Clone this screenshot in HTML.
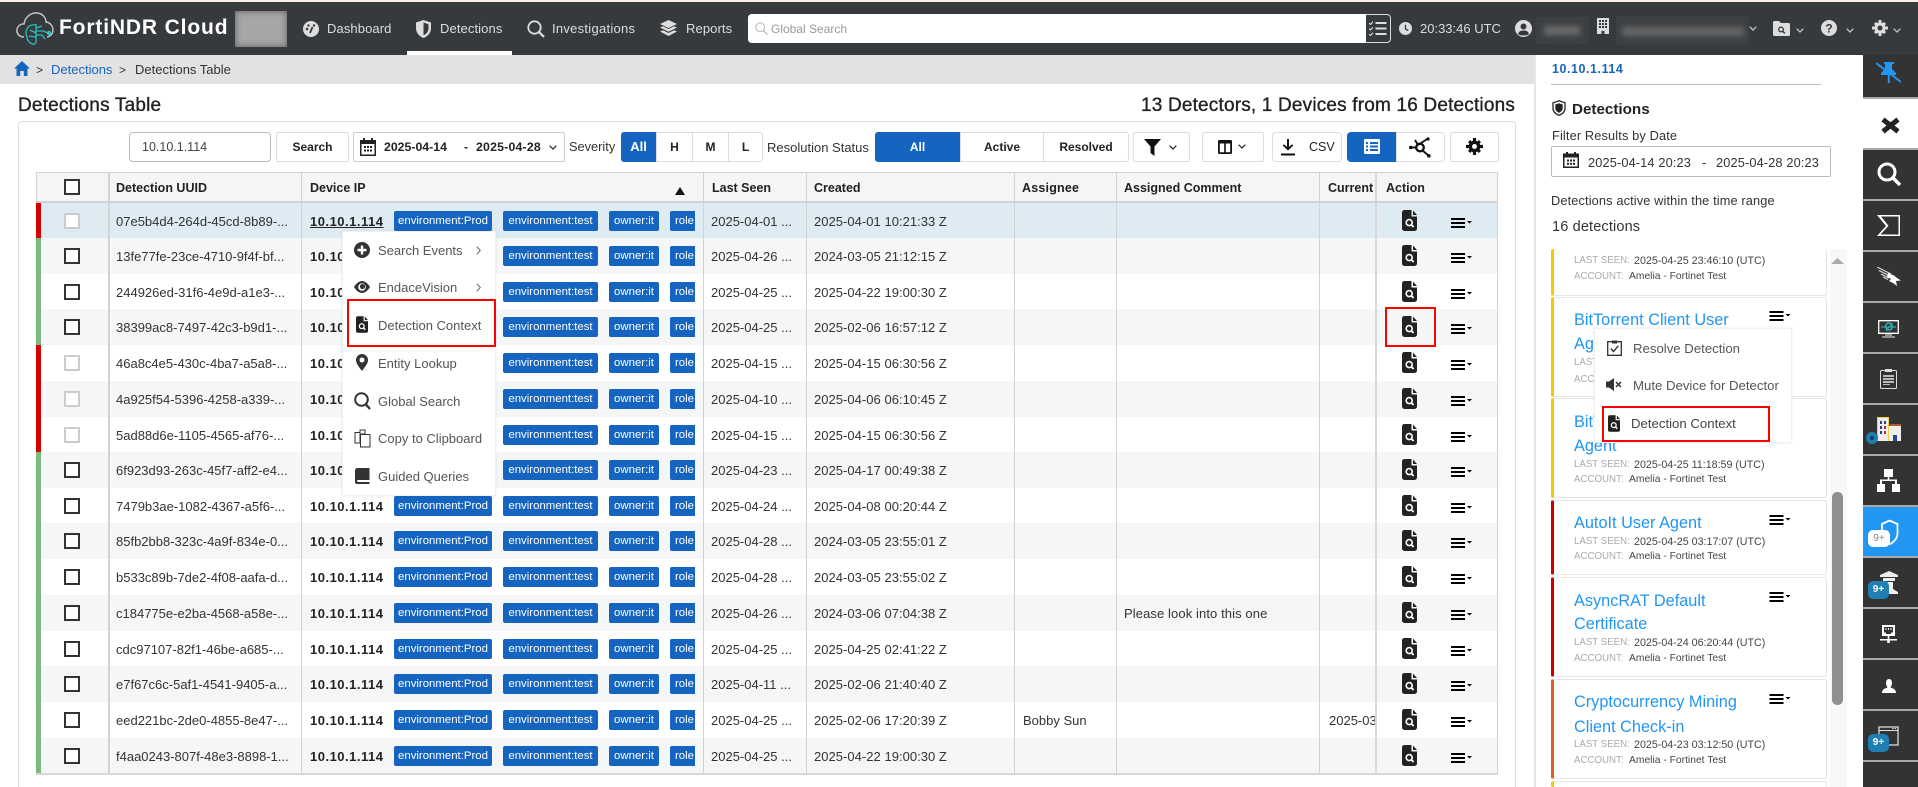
<!DOCTYPE html>
<html><head><meta charset="utf-8"><title>Detections Table</title>
<style>
*{box-sizing:border-box}
html,body{margin:0;padding:0;width:1918px;height:787px;overflow:hidden;background:#fff;font-family:"Liberation Sans",sans-serif;font-size:13px;color:#333}
.wrap{position:absolute;left:0;top:0;width:1918px;height:787px;overflow:hidden}
.a{position:absolute;white-space:nowrap}
.hd{position:absolute;left:0;top:2px;width:1918px;height:53px;background:#373a3d}
.nv{position:absolute;top:19px;line-height:20px;font-size:13px;color:#ddd;letter-spacing:.1px;white-space:nowrap}
.btn{position:absolute;top:132px;height:30px;border:1px solid #ddd;background:#fff;text-align:center;line-height:28px;color:#222;white-space:nowrap}
.ln{position:absolute;top:172px;width:1px;height:602px;background:#d2d2d2;z-index:3}
.th{position:absolute;top:178px;line-height:20px;font-weight:bold;font-size:12.5px;color:#222;white-space:nowrap;z-index:4}
.r{position:absolute;left:36px;width:1462px;line-height:37px;background:#fff;overflow:hidden}
.s{background:#f5f6f8}
.r>*{position:absolute;white-space:nowrap}
.g,.d{left:0;top:0;width:5px;height:36px}
.g{background:#7cb87f}.d{background:#d40000}
.cb{left:28px;top:10px;width:16px;height:16px;border:2px solid #333;background:#fff}
.cb.x{border-color:#ccc}
.u{left:80px}.ip{left:274px;font-weight:bold;color:#222;letter-spacing:.5px}
.t{top:8px;height:20px;line-height:21px;background:#1565c0;color:#fff;border-radius:2px;font-size:11.4px;text-align:center;overflow:hidden}
.t1{left:358px;width:98px}.t2{left:467px;width:95px}.t3{left:573px;width:50px}.t4{left:634px;width:25px;text-align:left;padding-left:5px;border-radius:2px 0 0 2px}
.ls{left:675px}.cr{left:778px;letter-spacing:.03px}
.doc{left:1366px;top:7px;width:15px;height:21px}
.ham{left:1415px;top:15px;width:21px;height:10px}
.mi{position:absolute;left:378px;line-height:20px;color:#555;white-space:nowrap;z-index:11}
.ct{position:absolute;font-size:16.3px;color:#2196f3;line-height:24px;white-space:nowrap}
.k{position:absolute;left:1574px;font-size:9.7px;color:#aaa;line-height:14px;white-space:nowrap}
.v{position:absolute;left:1629px;font-size:10.3px;color:#444;line-height:14px;white-space:nowrap}
.vd{position:absolute;left:1634px;font-size:10.7px;color:#444;line-height:14px;white-space:nowrap}
.cd{position:absolute;left:1551px;width:276px;background:#fff;border:1px solid #e6e6e6;border-left:3px solid #f5c800;border-radius:2px}
.sb{position:absolute;left:1863px;width:55px;height:2px;background:#a9a9a9}
.b9{position:absolute;left:1868px;width:21px;height:18px;line-height:18px;border-radius:5px;background:#1f7eb2;color:#fff;font-size:10px;font-weight:bold;text-align:center}
.ch{position:absolute;width:8px;height:5px}
.pn{position:absolute;line-height:20px;font-size:13.2px;color:#555;white-space:nowrap}
</style></head><body><div class="wrap">
<svg width="0" height="0" style="position:absolute">
<symbol id="doc" viewBox="0 0 15 21"><path fill="#222" d="M2.5 0H9.5V6.5H15V18.5A2.5 2.5 0 0 1 12.5 21H2.5A2.5 2.5 0 0 1 0 18.5V2.5A2.5 2.5 0 0 1 2.5 0Z"/><path fill="#222" d="M11 0.5L15 5H11Z"/><circle cx="7.2" cy="12.6" r="3" fill="none" stroke="#fff" stroke-width="1.6"/><path d="M9.4 14.8L11.6 17" stroke="#fff" stroke-width="1.8"/></symbol>
<symbol id="ham" viewBox="0 0 21 10"><path fill="#000" d="M0 0H14V2H0ZM0 4H14V6H0ZM0 8H14V10H0ZM16 3H21L18.5 5.5Z"/></symbol>
<symbol id="chv" viewBox="0 0 8 5"><path d="M.7.7L4 4 7.3.7" fill="none" stroke="currentColor" stroke-width="1.2"/></symbol>
</svg>

<div class="hd"></div>
<!-- logo -->
<svg class="a" style="left:15px;top:11px" width="40" height="36" viewBox="0 0 40 36"><path d="M9 26C3 26 1.5 21 2 18.5C2.5 15 6 12.5 9 13C10 6 16 1.5 22 2C28 2.5 31 7 31 11C35 11.5 38 15 38 19C38 23 35 25.500 32 26" fill="none" stroke="#c9c9c9" stroke-width="1.4"/><path d="M22 14C17 13 13 15 12 18C10 21 11 24 12 26C12 29 14 32 18 33C20 34 21 32 21 30V14M15 19L21 22M14 25L21 26M21 20H28L33 22M21 24H27L30 28M21 17L27 15" fill="none" stroke="#27c2bf" stroke-width="1.3"/><circle cx="34" cy="22" r="2.2" fill="#27c2bf"/></svg>
<div class="a" style="left:59px;top:15px;line-height:26px;font-size:21px;font-weight:bold;color:#fff;letter-spacing:.85px">FortiNDR Cloud</div>
<div class="a" style="left:235px;top:11px;width:52px;height:36px;background:#a6a6a6;box-shadow:inset 0 0 7px #5e5f60"></div>

<!-- nav -->
<svg class="a" style="left:303px;top:21px" width="16" height="16" viewBox="0 0 16 16"><circle cx="8" cy="8" r="8" fill="#ddd"/><circle cx="4" cy="8" r="1.3" fill="#373a3d"/><circle cx="5.5" cy="4.5" r="1.2" fill="#373a3d"/><circle cx="11" cy="4.5" r="1.2" fill="#373a3d"/><path d="M7 12L9.5 6" stroke="#373a3d" stroke-width="1.8"/></svg>
<div class="nv" style="left:327px">Dashboard</div>
<svg class="a" style="left:416px;top:20px" width="15" height="18" viewBox="0 0 15 18"><path d="M7.5 0L15 2.5V8C15 13 11.5 16.5 7.5 18C3.5 16.5 0 13 0 8V2.5Z" fill="#ddd"/><path d="M7.5 2.5L12.5 4.2V8C12.5 11.5 10.5 14 7.5 15.3Z" fill="#373a3d"/></svg>
<div class="nv" style="left:440px">Detections</div>
<div class="a" style="left:407px;top:51px;width:105px;height:4px;background:#fff"></div>
<svg class="a" style="left:527px;top:20px" width="18" height="18" viewBox="0 0 18 18"><circle cx="7.5" cy="7.5" r="6.2" fill="none" stroke="#ddd" stroke-width="1.8"/><path d="M12 12L17 17" stroke="#ddd" stroke-width="2.2"/></svg>
<div class="nv" style="left:552px;letter-spacing:.27px">Investigations</div>
<svg class="a" style="left:660px;top:20px" width="17" height="18" viewBox="0 0 17 18"><path fill="#ddd" d="M8.5 0L17 4 8.5 8 0 4ZM0 7.5L3 6.3 8.5 9 14 6.3 17 7.5 8.5 11.7ZM0 11.5L3 10.3 8.5 13 14 10.3 17 11.5 8.5 16Z"/></svg>
<div class="nv" style="left:686px">Reports</div>

<!-- global search -->
<div class="a" style="left:748px;top:14px;width:643px;height:29px;background:#373a3d;border:1px solid #ddd;border-radius:4px"></div>
<div class="a" style="left:748px;top:14px;width:618px;height:29px;background:#fff;border-radius:4px 0 0 4px"></div>
<svg class="a" style="left:755px;top:22px" width="13" height="13" viewBox="0 0 13 13"><circle cx="5.2" cy="5.2" r="4.4" fill="none" stroke="#bbb" stroke-width="1.1"/><path d="M8.4 8.4L12.5 12.5" stroke="#bbb" stroke-width="1.3"/></svg>
<div class="a" style="left:771px;top:19px;line-height:20px;font-size:12px;color:#999">Global Search</div>
<svg class="a" style="left:1369px;top:21px" width="18" height="15" viewBox="0 0 18 15"><path d="M0 2L1.5 3.5 4 .8M0 7.5L1.5 9 4 6.3M0 13L1.5 14.5 4 11.8" fill="none" stroke="#ddd" stroke-width="1.1"/><path d="M6.5 1H17.5V3H6.5ZM6.5 6.5H17.5V8.5H6.5ZM6.5 12H17.5V14H6.5Z" fill="#ddd"/></svg>

<svg class="a" style="left:1399px;top:22px" width="13" height="13" viewBox="0 0 13 13"><circle cx="6.5" cy="6.5" r="6.5" fill="#ddd"/><path d="M6.5 2.8V7L9.3 8.5" fill="none" stroke="#373a3d" stroke-width="1.3"/></svg>
<div class="a" style="left:1420px;top:19px;line-height:20px;font-size:13px;color:#ddd">20:33:46 UTC</div>
<svg class="a" style="left:1515px;top:20px" width="17" height="17" viewBox="0 0 17 17"><circle cx="8.5" cy="8.5" r="8.5" fill="#ddd"/><circle cx="8.5" cy="6.5" r="3" fill="#373a3d"/><path d="M3 14C4 11 6 10.5 8.5 10.5S13 11 14 14C12 16 5 16 3 14Z" fill="#373a3d"/></svg>
<div class="a" style="left:1536px;top:17px;width:53px;height:27px;background:#3d4043;overflow:hidden"><div style="position:absolute;left:8px;top:9px;width:36px;height:9px;background:#6a6a6a;filter:blur(3px)"></div></div>
<svg class="a" style="left:1597px;top:18px" width="12" height="16" viewBox="0 0 12 16"><path fill="#ddd" d="M0 0H12V16H7.5V13H4.5V16H0Z"/><path fill="#373a3d" d="M2 2H4V4H2ZM5 2H7V4H5ZM8 2H10V4H8ZM2 5H4V7H2ZM5 5H7V7H5ZM8 5H10V7H8ZM2 8H4V10H2ZM5 8H7V10H5ZM8 8H10V10H8Z"/></svg>
<div class="a" style="left:1616px;top:16px;width:133px;height:29px;background:#3d4043;overflow:hidden"><div style="position:absolute;left:6px;top:11px;width:122px;height:9px;background:#666;filter:blur(3px)"></div></div>
<svg class="ch" style="left:1749px;top:26px;color:#ccc"><use href="#chv"/></svg>
<svg class="a" style="left:1773px;top:21px" width="17" height="15" viewBox="0 0 17 15"><path fill="#ddd" d="M0 1.5A1.5 1.5 0 0 1 1.5 0H6L8 2H15.5A1.5 1.5 0 0 1 17 3.5V13.5A1.5 1.5 0 0 1 15.5 15H1.5A1.5 1.5 0 0 1 0 13.5Z"/><circle cx="8" cy="8.5" r="2.3" fill="none" stroke="#373a3d" stroke-width="1.3"/><path d="M9.7 10.2L11.8 12.3" stroke="#373a3d" stroke-width="1.5"/></svg>
<svg class="ch" style="left:1796px;top:28px;color:#ccc"><use href="#chv"/></svg>
<svg class="a" style="left:1821px;top:20px" width="16" height="16" viewBox="0 0 16 16"><circle cx="8" cy="8" r="8" fill="#ddd"/><text x="8" y="12.5" font-size="12" font-weight="bold" text-anchor="middle" fill="#373a3d" font-family="Liberation Sans,sans-serif">?</text></svg>
<svg class="ch" style="left:1846px;top:28px;color:#ccc"><use href="#chv"/></svg>
<svg class="a" style="left:1872px;top:20px" width="16" height="16" viewBox="0 0 16 16"><g fill="#ddd"><path fill-rule="evenodd" d="M8 2.500A5.500 5.500 0 1 0 8 13.500 5.500 5.500 0 1 0 8 2.500ZM8 5.500A2.500 2.500 0 1 1 8 10.500 2.500 2.500 0 1 1 8 5.500Z"/><path d="M6.500 0H9.500V3.500H6.500ZM6.500 12.500H9.500V16H6.500ZM0 6.500H3.500V9.500H0ZM12.500 6.500H16V9.500H12.500ZM1.900 4L4 1.900 6 4 4 6ZM10 12L12 10 14.100 12 12 14.100ZM1.900 12L4 10 6 12 4 14.100ZM10 4L12 1.900 14.100 4 12 6Z"/></g></svg>
<svg class="ch" style="left:1893px;top:28px;color:#ccc"><use href="#chv"/></svg>

<!-- breadcrumb -->
<div class="a" style="left:0;top:55px;width:1534px;height:29px;background:#e2e2e2"></div>
<svg class="a" style="left:14px;top:61px" width="16" height="15" viewBox="0 0 16 15"><path fill="#1565c0" d="M8 0L16 7.5H13.5V15H9.8V10H6.2V15H2.5V7.5H0Z"/></svg>
<div class="a" style="left:36px;top:60px;line-height:20px;font-size:12px;color:#333">&gt;</div>
<div class="a" style="left:51px;top:60px;line-height:20px;font-size:13px;color:#1565c0">Detections</div>
<div class="a" style="left:119px;top:60px;line-height:20px;font-size:12px;color:#333">&gt;</div>
<div class="a" style="left:135px;top:60px;line-height:20px;font-size:13px;color:#333">Detections Table</div>

<!-- headings -->
<div class="a" style="left:18px;top:94px;line-height:24px;font-size:19px;color:#222;-webkit-text-stroke:.35px #222;letter-spacing:.2px">Detections Table</div>
<div class="a" style="right:403px;top:94px;line-height:24px;font-size:19px;color:#222;-webkit-text-stroke:.35px #222;letter-spacing:.18px">13 Detectors, 1 Devices from 16 Detections</div>
<div class="a" style="left:18px;top:121px;width:1498px;height:666px;border:1px solid #ddd;border-bottom:0;border-radius:4px 4px 0 0"></div>

<!-- toolbar -->
<div class="a" style="left:129px;top:132px;width:142px;height:30px;border:1px solid #bbb;border-radius:4px;line-height:28px;padding-left:12px;font-size:12.5px;color:#444">10.10.1.114</div>
<div class="btn" style="left:276px;width:73px;border-radius:2px;font-weight:bold;font-size:12px">Search</div>
<div class="btn" style="left:353px;width:212px;border-color:#ccc;border-radius:2px"></div>
<svg class="a" style="left:360px;top:138px" width="16" height="18" viewBox="0 0 16 18"><path fill="#222" d="M0 2H3V0H5V2H11V0H13V2H16V18H0ZM1.5 6V16.500H14.5V6Z"/><path fill="#222" d="M4 8H6V10H4ZM7 8H9V10H7ZM10 8H12V10H10ZM4 11.5H6V13.5H4ZM7 11.5H9V13.5H7ZM10 11.5H12V13.5H10Z"/></svg>
<div class="a" style="left:384px;top:137px;line-height:20px;font-weight:bold;font-size:12.3px;color:#222">2025-04-14</div>
<div class="a" style="left:464px;top:137px;line-height:20px;font-weight:bold;font-size:12px;color:#222">-</div>
<div class="a" style="left:476px;top:137px;line-height:20px;font-weight:bold;font-size:12.3px;color:#222;letter-spacing:.2px">2025-04-28</div>
<svg class="ch" style="left:549px;top:145px;color:#222"><use href="#chv"/></svg>
<div class="a" style="left:569px;top:137px;line-height:20px;font-size:12.8px;color:#333">Severity</div>
<div class="btn" style="left:621px;width:35px;background:#1565c0;border-color:#1565c0;color:#fff;font-weight:bold;border-radius:3px 0 0 3px">All</div>
<div class="btn" style="left:656px;width:37px;font-weight:bold;font-size:12px">H</div>
<div class="btn" style="left:692px;width:37px;font-weight:bold;font-size:12px">M</div>
<div class="btn" style="left:728px;width:35px;font-weight:bold;font-size:12px;border-radius:0 3px 3px 0">L</div>
<div class="a" style="left:767px;top:138px;line-height:20px;font-size:13px;color:#333">Resolution Status</div>
<div class="btn" style="left:875px;width:85px;background:#1565c0;border-color:#1565c0;color:#fff;font-weight:bold;font-size:12px;border-radius:3px 0 0 3px">All</div>
<div class="btn" style="left:960px;width:84px;font-weight:bold;font-size:12px">Active</div>
<div class="btn" style="left:1043px;width:86px;font-weight:bold;font-size:12px;border-radius:0 3px 3px 0">Resolved</div>
<div class="btn" style="left:1133px;width:57px;border-radius:2px"></div>
<svg class="a" style="left:1144px;top:139px" width="17" height="17" viewBox="0 0 17 17"><path fill="#111" d="M0 0H17L10.5 7.5V17L6.5 14V7.5Z"/></svg>
<svg class="ch" style="left:1169px;top:145px;color:#222"><use href="#chv"/></svg>
<div class="btn" style="left:1202px;width:62px;border-radius:2px"></div>
<svg class="a" style="left:1218px;top:140px" width="14" height="14" viewBox="0 0 14 14"><path fill="#111" fill-rule="evenodd" d="M1.5 0H12.5A1.5 1.5 0 0 1 14 1.5V12.5A1.5 1.5 0 0 1 12.5 14H1.5A1.5 1.5 0 0 1 0 12.5V1.5A1.5 1.5 0 0 1 1.5 0ZM1.8 3.5V12.2H6.2V3.5ZM7.8 3.5V12.2H12.2V3.5Z"/></svg>
<svg class="ch" style="left:1238px;top:144px;color:#222"><use href="#chv"/></svg>
<div class="btn" style="left:1272px;width:70px;border-radius:4px;text-align:left;padding-left:36px;font-size:12.5px">CSV</div>
<svg class="a" style="left:1281px;top:139px" width="14" height="17" viewBox="0 0 14 17"><path fill="#111" d="M6 0H8V8L11 5.2 12.3 6.5 7 11.5 1.7 6.5 3 5.2 6 8ZM0 14.5H14V16.5H0Z"/></svg>
<div class="btn" style="left:1347px;width:50px;background:#1565c0;border-color:#1565c0;border-radius:4px 0 0 4px"></div>
<svg class="a" style="left:1364px;top:139px" width="16" height="15" viewBox="0 0 16 15"><path fill="#fff" fill-rule="evenodd" d="M1.5 0H14.5A1.5 1.5 0 0 1 16 1.5V13.5A1.5 1.5 0 0 1 14.5 15H1.5A1.5 1.5 0 0 1 0 13.5V1.5A1.5 1.5 0 0 1 1.5 0ZM2 3V5H4V3ZM6 3V5H14V3ZM2 6.5V8.5H4V6.5ZM6 6.5V8.5H14V6.5ZM2 10V12H4V10ZM6 10V12H14V10Z"/></svg>
<div class="btn" style="left:1396px;width:49px;border-radius:0 4px 4px 0"></div>
<svg class="a" style="left:1409px;top:137px" width="22" height="21" viewBox="0 0 22 21"><path d="M1 10.500H8M9 8L19 1.500M13 13L20 19M9 8L6 3" stroke="#111" stroke-width="1.9" fill="none"/><circle cx="11" cy="10.500" r="3.800" fill="none" stroke="#111" stroke-width="2.300"/><circle cx="1.800" cy="10.500" r="1.800" fill="#111"/><circle cx="19" cy="2" r="1.600" fill="#111"/><circle cx="19.800" cy="18.800" r="1.800" fill="#111"/></svg>
<div class="btn" style="left:1450px;width:49px;border-radius:2px"></div>
<svg class="a" style="left:1466px;top:138px" width="17" height="17" viewBox="0 0 16 16"><g fill="#111"><path fill-rule="evenodd" d="M8 2.500A5.500 5.500 0 1 0 8 13.500 5.500 5.500 0 1 0 8 2.500ZM8 5.700A2.300 2.300 0 1 1 8 10.300 2.300 2.300 0 1 1 8 5.700Z"/><path d="M6.500 0H9.500V3.500H6.500ZM6.500 12.500H9.500V16H6.500ZM0 6.500H3.500V9.500H0ZM12.500 6.500H16V9.500H12.500ZM1.900 4L4 1.900 6 4 4 6ZM10 12L12 10 14.100 12 12 14.100ZM1.900 12L4 10 6 12 4 14.100ZM10 4L12 1.900 14.100 4 12 6Z"/></g></svg>

<!-- table header -->
<div class="a" style="left:36px;top:172px;width:1462px;height:31px;background:#f5f5f5;border:1px solid #d2d2d2;border-bottom:2px solid #d2d2d2"></div>
<div class="a" style="left:64px;top:179px;width:16px;height:16px;border:2px solid #333;background:#fff;z-index:4"></div>
<div class="th" style="left:116px">Detection UUID</div>
<div class="th" style="left:310px">Device IP</div>
<svg class="a" style="left:675px;top:187px;z-index:4" width="10" height="8"><path d="M5 0L10 8H0Z" fill="#111"/></svg>
<div class="th" style="left:712px">Last Seen</div>
<div class="th" style="left:814px">Created</div>
<div class="th" style="left:1022px;letter-spacing:.2px">Assignee</div>
<div class="th" style="left:1124px">Assigned Comment</div>
<div class="th" style="left:1328px;width:47px;overflow:hidden">Current ...</div>
<div class="th" style="left:1386px">Action</div>

<!-- rows -->
<div class="r" style="top:203px;height:35px;background:#deebf3"><i class="d"></i><i class="cb x"></i><span class="u">07e5b4d4-264d-45cd-8b89-...</span><b class="ip" style="text-decoration:underline">10.10.1.114</b><span class="t t1">environment:Prod</span><span class="t t2">environment:test</span><span class="t t3">owner:it</span><span class="t t4">role:</span><span class="ls">2025-04-01 ...</span><span class="cr">2025-04-01 10:21:33 Z</span><svg class="doc"><use href="#doc"/></svg><svg class="ham"><use href="#ham"/></svg></div>
<div class="r s" style="top:238px;height:36px"><i class="g"></i><i class="cb"></i><span class="u">13fe77fe-23ce-4710-9f4f-bf...</span><b class="ip">10.10.1.114</b><span class="t t1">environment:Prod</span><span class="t t2">environment:test</span><span class="t t3">owner:it</span><span class="t t4">role:</span><span class="ls">2025-04-26 ...</span><span class="cr">2024-03-05 21:12:15 Z</span><svg class="doc"><use href="#doc"/></svg><svg class="ham"><use href="#ham"/></svg></div>
<div class="r" style="top:274px;height:35px"><i class="g"></i><i class="cb"></i><span class="u">244926ed-31f6-4e9d-a1e3-...</span><b class="ip">10.10.1.114</b><span class="t t1">environment:Prod</span><span class="t t2">environment:test</span><span class="t t3">owner:it</span><span class="t t4">role:</span><span class="ls">2025-04-25 ...</span><span class="cr">2025-04-22 19:00:30 Z</span><svg class="doc"><use href="#doc"/></svg><svg class="ham"><use href="#ham"/></svg></div>
<div class="r s" style="top:309px;height:36px"><i class="g"></i><i class="cb"></i><span class="u">38399ac8-7497-42c3-b9d1-...</span><b class="ip">10.10.1.114</b><span class="t t1">environment:Prod</span><span class="t t2">environment:test</span><span class="t t3">owner:it</span><span class="t t4">role:</span><span class="ls">2025-04-25 ...</span><span class="cr">2025-02-06 16:57:12 Z</span><svg class="doc"><use href="#doc"/></svg><svg class="ham"><use href="#ham"/></svg></div>
<div class="r" style="top:345px;height:36px"><i class="d"></i><i class="cb x"></i><span class="u">46a8c4e5-430c-4ba7-a5a8-...</span><b class="ip">10.10.1.114</b><span class="t t1">environment:Prod</span><span class="t t2">environment:test</span><span class="t t3">owner:it</span><span class="t t4">role:</span><span class="ls">2025-04-15 ...</span><span class="cr">2025-04-15 06:30:56 Z</span><svg class="doc"><use href="#doc"/></svg><svg class="ham"><use href="#ham"/></svg></div>
<div class="r s" style="top:381px;height:36px"><i class="d"></i><i class="cb x"></i><span class="u">4a925f54-5396-4258-a339-...</span><b class="ip">10.10.1.114</b><span class="t t1">environment:Prod</span><span class="t t2">environment:test</span><span class="t t3">owner:it</span><span class="t t4">role:</span><span class="ls">2025-04-10 ...</span><span class="cr">2025-04-06 06:10:45 Z</span><svg class="doc"><use href="#doc"/></svg><svg class="ham"><use href="#ham"/></svg></div>
<div class="r" style="top:417px;height:35px"><i class="d"></i><i class="cb x"></i><span class="u">5ad88d6e-1105-4565-af76-...</span><b class="ip">10.10.1.114</b><span class="t t1">environment:Prod</span><span class="t t2">environment:test</span><span class="t t3">owner:it</span><span class="t t4">role:</span><span class="ls">2025-04-15 ...</span><span class="cr">2025-04-15 06:30:56 Z</span><svg class="doc"><use href="#doc"/></svg><svg class="ham"><use href="#ham"/></svg></div>
<div class="r s" style="top:452px;height:36px"><i class="g"></i><i class="cb"></i><span class="u">6f923d93-263c-45f7-aff2-e4...</span><b class="ip">10.10.1.114</b><span class="t t1">environment:Prod</span><span class="t t2">environment:test</span><span class="t t3">owner:it</span><span class="t t4">role:</span><span class="ls">2025-04-23 ...</span><span class="cr">2025-04-17 00:49:38 Z</span><svg class="doc"><use href="#doc"/></svg><svg class="ham"><use href="#ham"/></svg></div>
<div class="r" style="top:488px;height:35px"><i class="g"></i><i class="cb"></i><span class="u">7479b3ae-1082-4367-a5f6-...</span><b class="ip">10.10.1.114</b><span class="t t1">environment:Prod</span><span class="t t2">environment:test</span><span class="t t3">owner:it</span><span class="t t4">role:</span><span class="ls">2025-04-24 ...</span><span class="cr">2025-04-08 00:20:44 Z</span><svg class="doc"><use href="#doc"/></svg><svg class="ham"><use href="#ham"/></svg></div>
<div class="r s" style="top:523px;height:36px"><i class="g"></i><i class="cb"></i><span class="u">85fb2bb8-323c-4a9f-834e-0...</span><b class="ip">10.10.1.114</b><span class="t t1">environment:Prod</span><span class="t t2">environment:test</span><span class="t t3">owner:it</span><span class="t t4">role:</span><span class="ls">2025-04-28 ...</span><span class="cr">2024-03-05 23:55:01 Z</span><svg class="doc"><use href="#doc"/></svg><svg class="ham"><use href="#ham"/></svg></div>
<div class="r" style="top:559px;height:36px"><i class="g"></i><i class="cb"></i><span class="u">b533c89b-7de2-4f08-aafa-d...</span><b class="ip">10.10.1.114</b><span class="t t1">environment:Prod</span><span class="t t2">environment:test</span><span class="t t3">owner:it</span><span class="t t4">role:</span><span class="ls">2025-04-28 ...</span><span class="cr">2024-03-05 23:55:02 Z</span><svg class="doc"><use href="#doc"/></svg><svg class="ham"><use href="#ham"/></svg></div>
<div class="r s" style="top:595px;height:36px"><i class="g"></i><i class="cb"></i><span class="u">c184775e-e2ba-4568-a58e-...</span><b class="ip">10.10.1.114</b><span class="t t1">environment:Prod</span><span class="t t2">environment:test</span><span class="t t3">owner:it</span><span class="t t4">role:</span><span class="ls">2025-04-26 ...</span><span class="cr">2024-03-06 07:04:38 Z</span><span style="left:1088px;letter-spacing:.1px">Please look into this one</span><svg class="doc"><use href="#doc"/></svg><svg class="ham"><use href="#ham"/></svg></div>
<div class="r" style="top:631px;height:35px"><i class="g"></i><i class="cb"></i><span class="u">cdc97107-82f1-46be-a685-...</span><b class="ip">10.10.1.114</b><span class="t t1">environment:Prod</span><span class="t t2">environment:test</span><span class="t t3">owner:it</span><span class="t t4">role:</span><span class="ls">2025-04-25 ...</span><span class="cr">2025-04-25 02:41:22 Z</span><svg class="doc"><use href="#doc"/></svg><svg class="ham"><use href="#ham"/></svg></div>
<div class="r s" style="top:666px;height:36px"><i class="g"></i><i class="cb"></i><span class="u">e7f67c6c-5af1-4541-9405-a...</span><b class="ip">10.10.1.114</b><span class="t t1">environment:Prod</span><span class="t t2">environment:test</span><span class="t t3">owner:it</span><span class="t t4">role:</span><span class="ls">2025-04-11 ...</span><span class="cr">2025-02-06 21:40:40 Z</span><svg class="doc"><use href="#doc"/></svg><svg class="ham"><use href="#ham"/></svg></div>
<div class="r" style="top:702px;height:36px"><i class="g"></i><i class="cb"></i><span class="u">eed221bc-2de0-4855-8e47-...</span><b class="ip">10.10.1.114</b><span class="t t1">environment:Prod</span><span class="t t2">environment:test</span><span class="t t3">owner:it</span><span class="t t4">role:</span><span class="ls">2025-04-25 ...</span><span class="cr">2025-02-06 17:20:39 Z</span><span style="left:987px">Bobby Sun</span><span style="left:1293px;width:47px;overflow:hidden">2025-03-01</span><svg class="doc"><use href="#doc"/></svg><svg class="ham"><use href="#ham"/></svg></div>
<div class="r s" style="top:738px;height:36px"><i class="g"></i><i class="cb"></i><span class="u">f4aa0243-807f-48e3-8898-1...</span><b class="ip">10.10.1.114</b><span class="t t1">environment:Prod</span><span class="t t2">environment:test</span><span class="t t3">owner:it</span><span class="t t4">role:</span><span class="ls">2025-04-25 ...</span><span class="cr">2025-04-22 19:00:30 Z</span><svg class="doc"><use href="#doc"/></svg><svg class="ham"><use href="#ham"/></svg></div>

<i class="ln" style="left:108px;width:2px"></i><i class="ln" style="left:301px"></i><i class="ln" style="left:703px"></i><i class="ln" style="left:806px"></i><i class="ln" style="left:1014px"></i><i class="ln" style="left:1116px"></i><i class="ln" style="left:1319px"></i><i class="ln" style="left:1375px;width:2px;background:#d8d8d8"></i><i class="ln" style="left:1497px"></i>
<div class="a" style="left:36px;top:773px;width:1462px;height:2px;background:#d8d8d8;z-index:3"></div>

<!-- context menu -->
<div class="a" style="left:342px;top:231px;width:154px;height:265px;background:#fff;border:1px solid #f0f0f0;box-shadow:0 0 3px rgba(0,0,0,.08);z-index:10"></div>
<svg class="a" style="left:354px;top:242px;z-index:11" width="16" height="16" viewBox="0 0 16 16"><circle cx="8" cy="8" r="8" fill="#333"/><path d="M6.8 3.5H9.2V6.8H12.5V9.2H9.2V12.5H6.8V9.2H3.5V6.8H6.8Z" fill="#fff"/></svg>
<div class="mi" style="top:241px">Search Events</div>
<svg class="a" style="left:476px;top:246px;z-index:11" width="5" height="9" viewBox="0 0 5 9"><path d="M.7.7L4.3 4.5.7 8.3" fill="none" stroke="#666" stroke-width="1"/></svg>
<svg class="a" style="left:354px;top:281px;z-index:11" width="16" height="12" viewBox="0 0 16 12"><path d="M0 6C2 2.5 5 0 8 0S14 2.5 16 6C14 9.5 11 12 8 12S2 9.5 0 6Z" fill="#333"/><circle cx="8" cy="6" r="3.8" fill="#fff"/><circle cx="8.5" cy="5.5" r="2.6" fill="#333"/></svg>
<div class="mi" style="top:278px">EndaceVision</div>
<svg class="a" style="left:476px;top:283px;z-index:11" width="5" height="9" viewBox="0 0 5 9"><path d="M.7.7L4.3 4.5.7 8.3" fill="none" stroke="#666" stroke-width="1"/></svg>
<div class="a" style="left:347px;top:299px;width:149px;height:48px;border:2px solid #f00;z-index:12"></div>
<svg class="a" style="left:356px;top:316px;z-index:11" width="12" height="17" viewBox="0 0 15 21"><use href="#doc"/></svg>
<div class="mi" style="top:316px">Detection Context</div>
<svg class="a" style="left:356px;top:354px;z-index:11" width="12" height="17" viewBox="0 0 12 17"><path fill="#333" fill-rule="evenodd" d="M6 0A6 6 0 0 1 12 6C12 10 8 14 6 17 4 14 0 10 0 6A6 6 0 0 1 6 0ZM6 3.5A2.5 2.5 0 1 0 6 8.5 2.5 2.5 0 1 0 6 3.5Z"/></svg>
<div class="mi" style="top:354px">Entity Lookup</div>
<svg class="a" style="left:354px;top:392px;z-index:11" width="17" height="18" viewBox="0 0 17 18"><circle cx="7.5" cy="7.5" r="6.3" fill="none" stroke="#333" stroke-width="2"/><path d="M11.5 12L16 17" stroke="#333" stroke-width="2.4"/></svg>
<div class="mi" style="top:392px">Global Search</div>
<svg class="a" style="left:354px;top:429px;z-index:11" width="17" height="19" viewBox="0 0 17 19"><path d="M6 5V1H11V5ZM1 3.5H6V14H1ZM6.5 5.5H16V18H6.5Z" fill="#fff" stroke="#333" stroke-width="1"/></svg>
<div class="mi" style="top:429px">Copy to Clipboard</div>
<svg class="a" style="left:355px;top:468px;z-index:11" width="15" height="16" viewBox="0 0 15 16"><path fill="#333" d="M2.5 0H14.5V12H2.5A1.5 1.500 0 0 0 2.500 14H14.500V16H2A2 2 0 0 1 0 14V2.500A2.500 2.500 0 0 1 2.500 0Z"/></svg>
<div class="mi" style="top:467px">Guided Queries</div>

<!-- red box on action -->
<div class="a" style="left:1385px;top:307px;width:51px;height:40px;border:2px solid #f00;z-index:6"></div>

<!-- right panel -->
<div class="a" style="left:1534px;top:55px;width:329px;height:732px;background:#fff;border-left:2px solid #e6e6e6"></div>
<div class="a" style="left:1552px;top:59px;line-height:20px;font-size:12.5px;font-weight:bold;color:#1565c0;letter-spacing:.55px">10.10.1.114</div>
<div class="a" style="left:1551px;top:84px;width:270px;height:1px;background:#bbb"></div>
<svg class="a" style="left:1552px;top:100px" width="14" height="16" viewBox="0 0 14 16"><path d="M7 .8L13 2.8V8C13 11.5 10.5 14 7 15.2 3.5 14 1 11.5 1 8V2.8Z" fill="none" stroke="#222" stroke-width="1.3"/><path d="M7 3.3L10.7 4.5V8C10.7 10.3 9 12 7 12.8 5 12 3.3 10.3 3.3 8V4.5Z" fill="#222"/></svg>
<div class="a" style="left:1572px;top:100px;line-height:20px;font-size:15.2px;font-weight:bold;color:#222">Detections</div>
<div class="a" style="left:1552px;top:126px;line-height:20px;font-size:12.8px;color:#333;letter-spacing:.13px">Filter Results by Date</div>
<div class="a" style="left:1551px;top:146px;width:280px;height:31px;border:1px solid #bbb;border-radius:2px"></div>
<svg class="a" style="left:1563px;top:152px" width="16" height="16" viewBox="0 0 16 16"><path fill="#222" d="M0 1.5H3V0H5V1.5H11V0H13V1.5H16V16H0ZM1.5 5.5V14.5H14.5V5.5Z"/><path fill="#222" d="M4 7.5H6V9.5H4ZM7 7.5H9V9.5H7ZM10 7.5H12V9.5H10ZM4 10.8H6V12.8H4ZM7 10.8H9V12.8H7ZM10 10.8H12V12.8H10Z"/></svg>
<div class="a" style="left:1588px;top:153px;line-height:20px;font-size:12.8px;color:#333;letter-spacing:.12px">2025-04-14 20:23</div>
<div class="a" style="left:1702px;top:153px;line-height:20px;font-size:12.8px;color:#333">-</div>
<div class="a" style="left:1716px;top:153px;line-height:20px;font-size:12.8px;color:#333;letter-spacing:.12px">2025-04-28 20:23</div>
<div class="a" style="left:1551px;top:191px;line-height:20px;font-size:12.8px;color:#333;letter-spacing:.12px">Detections active within the time range</div>
<div class="a" style="left:1552px;top:217px;line-height:20px;font-size:14.5px;color:#333;letter-spacing:.15px">16 detections</div>

<div class="a" style="left:1830px;top:249px;width:17px;height:538px;background:#f8f8f8"></div>
<svg class="a" style="left:1831px;top:258px" width="13" height="6"><path d="M6.5 0L13 6H0Z" fill="#a8a8a8"/></svg>
<div class="a" style="left:1832px;top:492px;width:11px;height:213px;background:#8f8f8f;border-radius:5px"></div>

<div class="cd" style="top:249px;height:47px;border-top:0"></div>
<div class="k" style="top:254px">LAST SEEN:</div><div class="vd" style="top:254px">2025-04-25 23:46:10 (UTC)</div>
<div class="k" style="top:270px">ACCOUNT:</div><div class="v" style="top:270px">Amelia - Fortinet Test</div>

<div class="cd" style="top:297px;height:100px"></div>
<div class="ct" style="left:1574px;top:308px">BitTorrent Client User</div>
<div class="ct" style="left:1574px;top:332px">Agent</div>
<div class="k" style="top:356px">LAST</div><div class="k" style="top:373px">ACCOUNT</div>
<svg class="a" style="left:1769px;top:311px" width="22" height="10"><use href="#ham"/></svg>

<div class="cd" style="top:398px;height:100px"></div>
<div class="ct" style="left:1574px;top:410px">BitTorrent Client User</div>
<div class="ct" style="left:1574px;top:434px">Agent</div>
<div class="k" style="top:458px">LAST SEEN:</div><div class="vd" style="top:458px">2025-04-25 11:18:59 (UTC)</div>
<div class="k" style="top:473px">ACCOUNT:</div><div class="v" style="top:473px">Amelia - Fortinet Test</div>

<div class="cd" style="top:500px;height:75px;border-left-color:#cc0000"></div>
<div class="ct" style="left:1574px;top:511px">AutoIt User Agent</div>
<div class="k" style="top:535px">LAST SEEN:</div><div class="vd" style="top:535px">2025-04-25 03:17:07 (UTC)</div>
<div class="k" style="top:550px">ACCOUNT:</div><div class="v" style="top:550px">Amelia - Fortinet Test</div>
<svg class="a" style="left:1769px;top:515px" width="22" height="10"><use href="#ham"/></svg>

<div class="cd" style="top:577px;height:100px;border-left-color:#cc0000"></div>
<div class="ct" style="left:1574px;top:589px">AsyncRAT Default</div>
<div class="ct" style="left:1574px;top:612px">Certificate</div>
<div class="k" style="top:636px">LAST SEEN:</div><div class="vd" style="top:636px">2025-04-24 06:20:44 (UTC)</div>
<div class="k" style="top:652px">ACCOUNT:</div><div class="v" style="top:652px">Amelia - Fortinet Test</div>
<svg class="a" style="left:1769px;top:592px" width="22" height="10"><use href="#ham"/></svg>

<div class="cd" style="top:679px;height:100px;border-left-color:#e05a2b"></div>
<div class="ct" style="left:1574px;top:690px">Cryptocurrency Mining</div>
<div class="ct" style="left:1574px;top:715px">Client Check-in</div>
<div class="k" style="top:738px">LAST SEEN:</div><div class="vd" style="top:738px">2025-04-23 03:12:50 (UTC)</div>
<div class="k" style="top:754px">ACCOUNT:</div><div class="v" style="top:754px">Amelia - Fortinet Test</div>
<svg class="a" style="left:1769px;top:694px" width="22" height="10"><use href="#ham"/></svg>

<div class="cd" style="top:781px;height:6px;border-bottom:0"></div>

<!-- panel dropdown -->
<div class="a" style="left:1594px;top:328px;width:198px;height:115px;background:#fff;border:1px solid #f0f0f0;box-shadow:0 0 3px rgba(0,0,0,.08)"></div>
<svg class="a" style="left:1607px;top:339px" width="15" height="17" viewBox="0 0 15 17"><path d="M.7 2.7H14.3V16.3H.7Z" fill="none" stroke="#333" stroke-width="1.3"/><path d="M5 1.5H10V4.5H5Z" fill="#333"/><path d="M3.8 9.5L6.5 12.5 11.3 6.8" fill="none" stroke="#333" stroke-width="1.4"/></svg>
<div class="pn" style="left:1633px;top:339px">Resolve Detection</div>
<svg class="a" style="left:1606px;top:378px" width="16" height="13" viewBox="0 0 16 13"><path fill="#333" d="M0 3.5H3L8 0V13L3 9.5H0Z"/><path d="M10 4L15 9M15 4L10 9" stroke="#333" stroke-width="1.5"/></svg>
<div class="pn" style="left:1633px;top:376px">Mute Device for Detector</div>
<div class="a" style="left:1602px;top:406px;width:168px;height:36px;border:2px solid #f00"></div>
<svg class="a" style="left:1608px;top:415px" width="12" height="17" viewBox="0 0 15 21"><use href="#doc"/></svg>
<div class="pn" style="left:1631px;top:414px;color:#444">Detection Context</div>

<!-- sidebar -->
<div class="a" style="left:1863px;top:55px;width:55px;height:732px;background:#333"></div>
<div class="a" style="left:1863px;top:99px;width:55px;height:50px;background:#fff"></div>
<div class="a" style="left:1863px;top:506px;width:55px;height:51px;background:#2196f3"></div>
<div class="sb" style="top:97px"></div><div class="sb" style="top:148px"></div><div class="sb" style="top:199px"></div><div class="sb" style="top:250px"></div><div class="sb" style="top:301px"></div><div class="sb" style="top:352px"></div><div class="sb" style="top:403px"></div><div class="sb" style="top:454px"></div><div class="sb" style="top:505px"></div><div class="sb" style="top:556px"></div><div class="sb" style="top:607px"></div><div class="sb" style="top:658px"></div><div class="sb" style="top:709px"></div><div class="sb" style="top:760px"></div>
<svg class="a" style="left:1876px;top:62px" width="25" height="21" viewBox="0 0 25 21"><path fill="#2196f3" d="M8 0H18V2H16V7L20 11V13H13.8V21H11.8V13H5V11L9 7V2H8Z"/><path d="M0 1L25 20" stroke="#2196f3" stroke-width="2"/></svg>
<svg class="a" style="left:1880px;top:117px" width="21" height="17" viewBox="0 0 21 17"><path d="M3 2.500L18 14.500M18 2.500L3 14.500" stroke="#222" stroke-width="5"/></svg>
<svg class="a" style="left:1877px;top:162px" width="24" height="24" viewBox="0 0 24 24"><circle cx="10" cy="10" r="8" fill="none" stroke="#fff" stroke-width="3"/><path d="M16 16L23 23" stroke="#fff" stroke-width="3.5"/></svg>
<svg class="a" style="left:1877px;top:215px" width="23" height="21" viewBox="0 0 23 21"><path fill="#fff" d="M0 0H23V21H0L9 11ZM4 1.500L11.500 10.800 3.500 19.500H21.500V1.500Z"/></svg>
<svg class="a" style="left:1877px;top:267px" width="24" height="20" viewBox="0 0 24 20"><path d="M0 0L14 7M2 3.500L13 9M4 7L12 11M6 10L11 12.500" stroke="#ddd" stroke-width="1.1" fill="none"/><path fill="#fff" d="M11 6L17 8.500 20 11 24 13.500 19 14 20 19 16 16 12 14 14 12 10 10Z"/></svg>
<svg class="a" style="left:1878px;top:320px" width="21" height="18" viewBox="0 0 21 18"><path d="M.7.7H20.300V13.300H.7Z" fill="none" stroke="#fff" stroke-width="1.3"/><path d="M7 15H14M4 17H17" stroke="#ccc" stroke-width="1.3"/><path d="M3 7H18" stroke="#27c2bf" stroke-width="1"/><circle cx="11" cy="6.500" r="3.500" fill="none" stroke="#27c2bf" stroke-width="1.2"/><path d="M8 11L14 3" stroke="#27c2bf" stroke-width="1"/></svg>
<svg class="a" style="left:1880px;top:368px" width="17" height="21" viewBox="0 0 17 21"><path d="M1.500 2.500H15.500A1 1 0 0 1 16.500 3.500V19.500A1 1 0 0 1 15.500 20.500H1.500A1 1 0 0 1 .5 19.500V3.500A1 1 0 0 1 1.500 2.500Z" fill="#333" stroke="#ddd"/><path d="M5 1H12V4H5Z" fill="#ddd"/><path d="M3 7H14V9H3ZM3 10H14V12H3ZM3 13H14V15H3ZM3 16H10V17H3Z" fill="#bbb"/></svg>
<svg class="a" style="left:1877px;top:417px" width="24" height="24" viewBox="0 0 24 24"><path fill="#f2d043" d="M0 0H12V24H0Z"/><path fill="#eee" d="M1 1H11V24H1Z"/><path fill="#2c3e91" d="M3 4H5V7H3ZM7 4H9V7H7ZM3 9H5V12H3ZM3 14H5V17H3Z"/><path fill="#c03030" d="M7 9H9V12H7ZM7 14H9V17H7Z"/><path fill="#eee" d="M12 9H24V24H20V18H16V24H12Z"/><path fill="#b05a30" d="M13 7H24V9H13Z"/><path fill="#23479c" d="M16 18H20V24H16Z"/></svg>
<div class="a" style="left:1866px;top:432px;width:12px;height:12px;border-radius:50%;background:#1f7eb2"></div>
<div class="a" style="left:1870px;top:436px;width:4px;height:4px;border-radius:50%;background:#163b57"></div>
<svg class="a" style="left:1877px;top:469px" width="23" height="23" viewBox="0 0 23 23"><path fill="#fff" d="M7 0H16V8H12.300V10.500H20V15H23V23H15V15H18V12H5V15H8V23H0V15H3V10.500H10.700V8H7Z"/></svg>
<svg class="a" style="left:1880px;top:519px" width="19" height="27" viewBox="0 0 19 27"><path d="M9.500 1.500L17.500 5V14C17.500 19 14 23 9.500 25.500" fill="none" stroke="#fff" stroke-width="1.8"/><path d="M9.500 1.500L2 5V11" fill="none" stroke="#fff" stroke-width="1.8"/></svg>
<div class="a" style="left:1868px;top:530px;width:22px;height:17px;line-height:17px;background:#fff;border-radius:5px;color:#888;font-size:10px;text-align:center">9+</div>
<svg class="a" style="left:1879px;top:571px" width="21" height="23" viewBox="0 0 21 23"><path fill="#eee" d="M10 0L19 4V6H1V4ZM4 7H16V10H4ZM6 11H14V18L19 21V23H6Z"/></svg>
<div class="b9" style="top:581px">9+</div>
<svg class="a" style="left:1880px;top:625px" width="17" height="18" viewBox="0 0 17 18"><path fill="#fff" d="M2 0H15V11H9.300V14H17V15.500H9.800V18H7.200V15.500H0V14H7.700V11H2Z"/><path fill="#333" d="M4 2H13V7.500H11V9H6V7.500H4Z"/><path fill="#fff" d="M5.500 3H6.500V5H5.500ZM8 3H9V5H8ZM10.500 3H11.500V5H10.500Z"/></svg>
<svg class="a" style="left:1882px;top:679px" width="14" height="14" viewBox="0 0 14 14"><path fill="#fff" d="M7 0C9 0 10 1.800 10 4S9 7.500 8.500 8.500C11 9.500 14 10 14 14H0C0 10 3 9.500 5.500 8.500 5 7.500 4 6.200 4 4S5 0 7 0Z"/></svg>
<svg class="a" style="left:1878px;top:726px" width="21" height="20" viewBox="0 0 21 20"><path d="M1 1H20V19H1Z" fill="#333" stroke="#ddd" stroke-width="1.3"/><path d="M1 4.500H20" stroke="#ddd" stroke-width="1"/><path d="M14 2.500H15.500M16.500 2.500H18" stroke="#ddd" stroke-width="1"/></svg>
<div class="b9" style="top:734px">9+</div>

<div class="a" style="left:0;top:0;width:1918px;height:2px;background:#fbeeee"></div>
</div></body></html>
